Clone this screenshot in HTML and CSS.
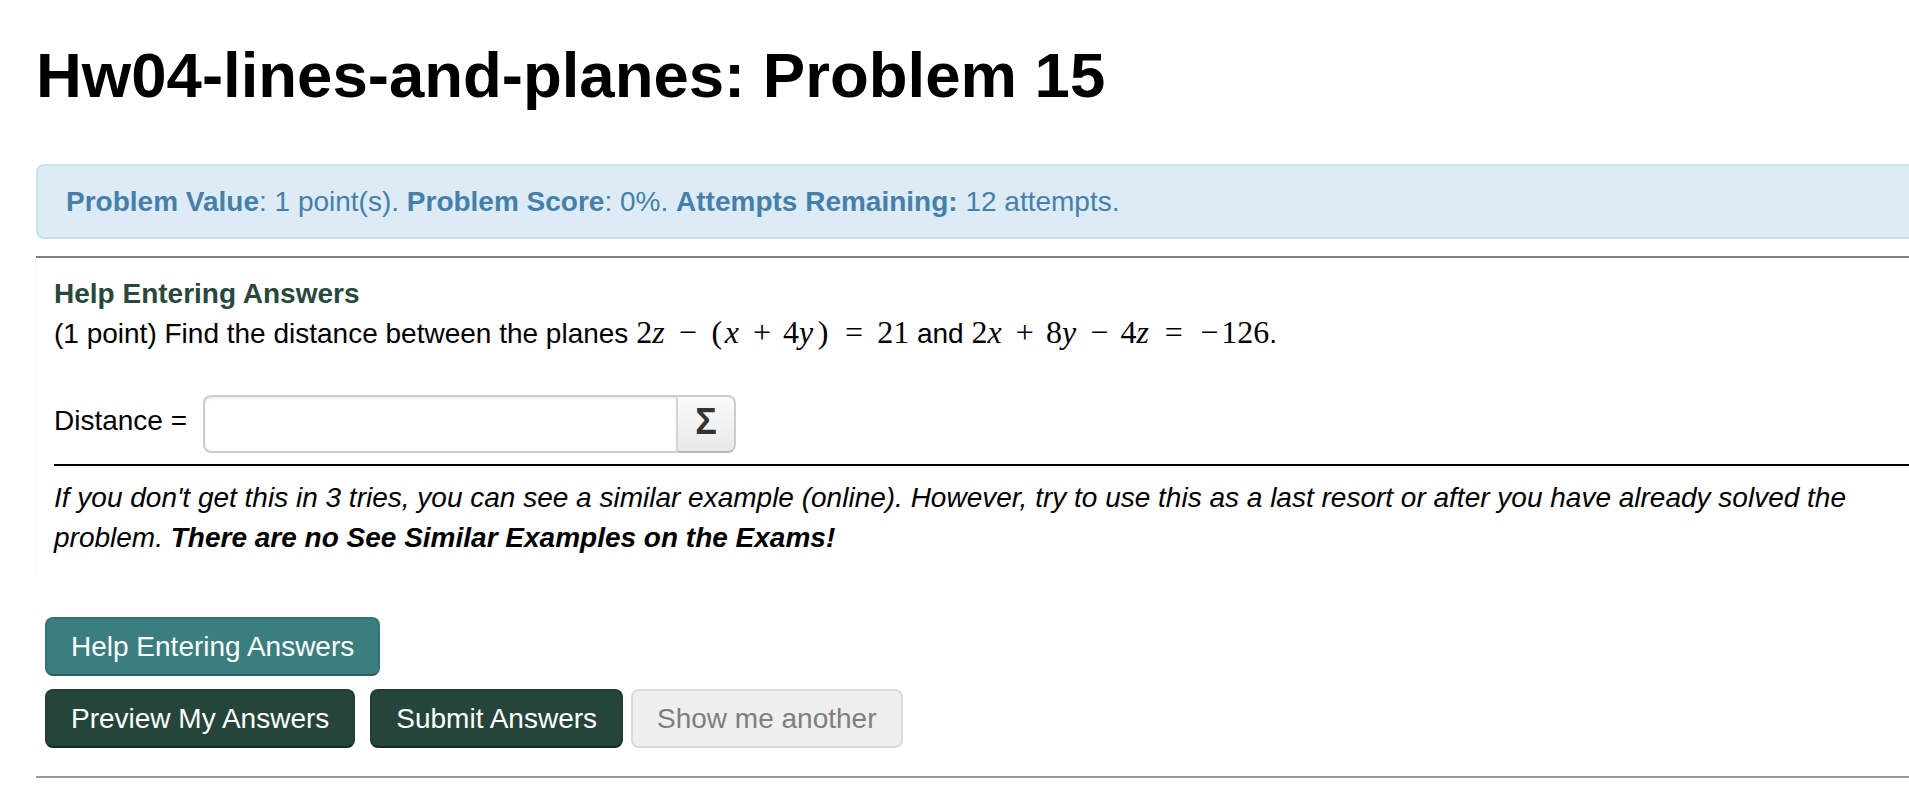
FILE: index.html
```html
<!DOCTYPE html>
<html lang="en">
<head>
<meta charset="utf-8">
<title>Hw04-lines-and-planes: Problem 15</title>
<link rel="stylesheet" href="styles.css">
</head>
<body>
<div class="page">
  <h1 class="title">Hw04-lines-and-planes: Problem 15</h1>

  <div class="alert-info">
    <b>Problem Value</b>: 1 point(s). <b>Problem Score</b>: 0%. <b>Attempts Remaining:</b> 12 attempts.
  </div>

  <hr class="rule-grey">

  <div class="problem">
    <div class="help-heading">Help Entering Answers</div>
    <div class="statement">(1 point) Find the distance between the planes <span class="math"><span class="n">2</span><i class="v">z</i><span class="bin">&minus;</span><span class="paren">(</span><i class="v">x</i><span class="bin">+</span><span class="n">4</span><i class="v">y</i><span class="paren">)</span><span class="rel">=</span><span class="n">21</span></span> and <span class="math"><span class="n">2</span><i class="v">x</i><span class="bin">+</span><span class="n">8</span><i class="v">y</i><span class="bin">&minus;</span><span class="n">4</span><i class="v">z</i><span class="rel">=</span><span class="un">&minus;</span><span class="n">126</span></span>.</div>

    <div class="answer-row">
      <span class="answer-label">Distance =</span>
      <div class="input-append">
        <input class="answer-input" type="text" aria-label="Distance">
        <span class="sigma-btn">&Sigma;</span>
      </div>
    </div>

    <hr class="rule-black">

    <p class="note">If you don't get this in 3 tries, you can see a similar example (online). However, try to use this as a last resort or after you have already solved the problem. <b>There are no See Similar Examples on the Exams!</b></p>
  </div>

  <div class="actions">
    <div class="action-row">
      <button class="btn btn-teal" type="button">Help Entering Answers</button>
    </div>
    <div class="action-row">
      <button class="btn btn-dark btn-preview" type="button">Preview My Answers</button>
      <button class="btn btn-dark btn-submit" type="button">Submit Answers</button>
      <button class="btn btn-light" type="button">Show me another</button>
    </div>
  </div>

  <hr class="rule-bottom">
</div>
</body>
</html>
```

FILE: styles.css
```css
html, body {
  margin: 0;
  padding: 0;
  overflow: hidden;
  background: #ffffff;
}

body {
  font-family: "Liberation Sans", Arial, Helvetica, sans-serif;
  font-size: 28px;
  line-height: 40px;
  color: #000000;
}

.page {
  width: 2100px;
  padding-left: 36px;
  box-sizing: border-box;
}

.title {
  margin: 40px 0 0 0;
  font-size: 63.5px;
  line-height: 70px;
  font-weight: bold;
  color: #000;
}

.alert-info {
  margin-top: 54px;
  padding: 16px 30px 15px 28px;
  background: #dcebf6;
  border: 2px solid #c3e3ee;
  border-radius: 8px;
  color: #4680a8;
}

.alert-info b {
  font-weight: bold;
}

.rule-grey {
  margin: 17px 0 0 0;
  border: 0;
  height: 2px;
  background: #808080;
}

.problem {
  padding: 16px 0 17px 18px;
  border-left: 1px solid #f3f3f3;
  margin-left: -1px;
}

.help-heading {
  font-weight: bold;
  color: #28483d;
}

.math {
  font-family: "Liberation Serif", "Times New Roman", serif;
  font-size: 32px;
  line-height: 1;
  white-space: nowrap;
}

.math .v {
  font-style: italic;
  margin-right: 0.06em;
}

.math .bin {
  margin: 0 0.38em;
}

.math .rel {
  margin: 0 0.44em;
}

.math .un {
  margin: 0 0.1em;
}

.math .paren {
  padding: 0 0.08em;
}

.answer-row {
  margin-top: 41px;
  display: flex;
  align-items: center;
}

.answer-label {
  padding-bottom: 7px;
  margin-right: 16px;
}

.input-append {
  display: flex;
}

.answer-input {
  box-sizing: border-box;
  width: 475px;
  height: 58px;
  margin: 0;
  padding: 8px 12px;
  border: 2px solid #cccccc;
  border-right-color: #d4d4d4;
  border-radius: 8px 0 0 8px;
  box-shadow: inset 0 2px 2px rgba(0, 0, 0, 0.075);
  font-family: "Liberation Sans", Arial, sans-serif;
  font-size: 28px;
  outline: none;
  background: #fff;
}

.sigma-btn {
  box-sizing: border-box;
  width: 58px;
  height: 58px;
  display: flex;
  align-items: center;
  justify-content: center;
  border: 2px solid #cccccc;
  border-left: 0;
  border-bottom-color: #b8b8b8;
  border-radius: 0 8px 8px 0;
  background: linear-gradient(#fbfbfb, #e8e8e8);
  font-family: "Liberation Sans", Arial, sans-serif;
  font-weight: bold;
  font-size: 36px;
  line-height: 1;
  color: #333;
  padding-bottom: 4px;
}

.rule-black {
  margin: 11px 0 0 0;
  border: 0;
  height: 2px;
  background: #000;
}

.note {
  margin: 12px 0 0 0;
  max-width: 1845px;
  font-style: italic;
  color: #000;
}

.note b {
  font-weight: bold;
}

.actions {
  margin-top: 42px;
  padding-left: 9px;
}

.action-row {
  display: flex;
  align-items: flex-start;
}

.action-row + .action-row {
  margin-top: 13px;
}

.btn {
  box-sizing: border-box;
  height: 59px;
  margin: 0;
  padding: 8px 24px 7px;
  border: 2px solid transparent;
  border-radius: 8px;
  font-family: "Liberation Sans", Arial, sans-serif;
  font-size: 28px;
  line-height: 40px;
  white-space: nowrap;
  cursor: pointer;
}

.btn-teal {
  background: #3a7e7f;
  border-color: #347374 #347374 #2a5d5e;
  color: #ffffff;
}

.btn-dark {
  background: #25453b;
  border-color: #203c33 #203c33 #172b25;
  color: #ffffff;
}

.btn-preview {
  margin-right: 15px;
}

.btn-submit {
  margin-right: 8px;
}

.btn-light {
  background: #efefef;
  border-color: #dadada;
  color: #7e7e7e;
}

.rule-bottom {
  margin: 28px 0 0 0;
  border: 0;
  height: 2px;
  background: #9a9a9a;
}
```
